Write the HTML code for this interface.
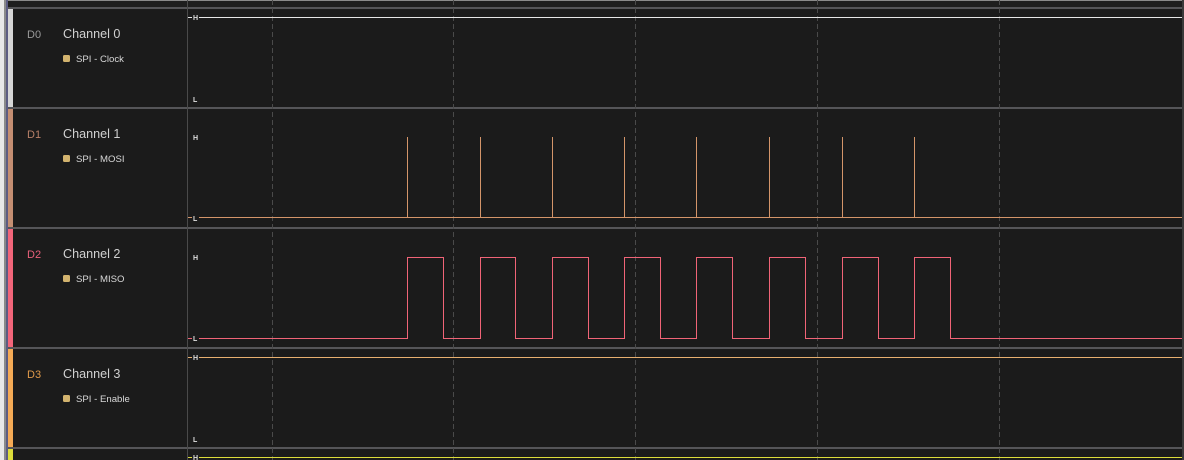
<!DOCTYPE html>
<html><head><style>
html,body{margin:0;padding:0;background:#1b1b1b;width:1184px;height:460px;overflow:hidden}
svg{display:block}
text{font-family:"Liberation Sans",sans-serif}
</style></head><body>
<svg width="1184" height="460" xmlns="http://www.w3.org/2000/svg">
<rect width="1184" height="460" fill="#1b1b1b"/>
<rect x="0" y="0" width="4" height="460" fill="#e8e8e8"/>
<rect x="4" y="0" width="2" height="460" fill="#8a8a8a"/>
<rect x="6" y="0" width="2" height="460" fill="#5c5c82"/>
<rect x="8" y="9" width="5" height="98" fill="#d6d6d6"/>
<rect x="8" y="109" width="5" height="118" fill="#c48e72"/>
<rect x="8" y="229" width="5" height="118" fill="#f2657a"/>
<rect x="8" y="349" width="5" height="98" fill="#f5aa55"/>
<rect x="8" y="449" width="5" height="11" fill="#dcdc3a"/>
<rect x="8" y="0" width="1176" height="8" fill="#1e1e1e"/>
<rect x="8" y="0" width="1176" height="1" fill="#8a8a8a"/>
<g fill="#555558">
<rect x="8" y="7" width="1176" height="2"/>
<rect x="8" y="107" width="1176" height="2"/>
<rect x="8" y="227" width="1176" height="2"/>
<rect x="8" y="347" width="1176" height="2"/>
<rect x="8" y="447" width="1176" height="2"/>
</g>
<rect x="187" y="0" width="1" height="460" fill="#4a4a4a"/>
<rect x="1182" y="0" width="2" height="460" fill="#3a3a3a"/>
<g stroke="#4a4a4a" stroke-width="1" stroke-dasharray="5,3">
<line x1="272.5" y1="0" x2="272.5" y2="460"/>
<line x1="453.5" y1="0" x2="453.5" y2="460"/>
<line x1="635.5" y1="0" x2="635.5" y2="460"/>
<line x1="817.5" y1="0" x2="817.5" y2="460"/>
<line x1="999.5" y1="0" x2="999.5" y2="460"/>
</g>
<g font-size="11">
<text x="27" y="38" fill="#9a9a9a">D0</text>
<text x="27" y="138" fill="#b88068">D1</text>
<text x="27" y="258" fill="#e8607a">D2</text>
<text x="27" y="378" fill="#e09a4a">D3</text>
</g>
<g font-size="12.6" fill="#d0d0d0">
<text x="63" y="38">Channel 0</text>
<text x="63" y="138">Channel 1</text>
<text x="63" y="258">Channel 2</text>
<text x="63" y="378">Channel 3</text>
</g>
<g fill="#d2b36e">
<rect x="63" y="55" width="7" height="7" rx="1.5"/>
<rect x="63" y="155" width="7" height="7" rx="1.5"/>
<rect x="63" y="275" width="7" height="7" rx="1.5"/>
<rect x="63" y="395" width="7" height="7" rx="1.5"/>
</g>
<g font-size="9.6" fill="#d8d8d8">
<text x="76" y="62">SPI - Clock</text>
<text x="76" y="162">SPI - MOSI</text>
<text x="76" y="282">SPI - MISO</text>
<text x="76" y="402">SPI - Enable</text>
</g>
<line x1="188" y1="17.5" x2="1182" y2="17.5" stroke="#e6e6e6" stroke-width="1"/>
<path d="M188 217.5 H1182 M407.5 217.5V137 M480.5 217.5V137 M552.5 217.5V137 M624.5 217.5V137 M696.5 217.5V137 M769.5 217.5V137 M842.5 217.5V137 M914.5 217.5V137" stroke="#d4956a" stroke-width="1" fill="none"/>
<path d="M188 338.5 H407.5 V257.5 H443.5 V338.5 H480.5 V257.5 H515.5 V338.5 H552.5 V257.5 H588.5 V338.5 H624.5 V257.5 H660.5 V338.5 H696.5 V257.5 H732.5 V338.5 H769.5 V257.5 H805.5 V338.5 H842.5 V257.5 H878.5 V338.5 H914.5 V257.5 H950.5 V338.5 H1182" stroke="#f06477" stroke-width="1" fill="none"/>
<line x1="188" y1="357.5" x2="1182" y2="357.5" stroke="#e8b070" stroke-width="1"/>
<line x1="188" y1="457.5" x2="1182" y2="457.5" stroke="#dcdc3a" stroke-width="1"/>
<g fill="#1b1b1b">
<rect x="192" y="13" width="7" height="9"/>
<rect x="192" y="213" width="7" height="9"/>
<rect x="192" y="334" width="7" height="9"/>
<rect x="192" y="353" width="7" height="9"/>
<rect x="192" y="453" width="7" height="7"/>
</g>
<g font-size="7" font-weight="bold" fill="#e0e0e0">
<text x="193" y="20">H</text><text x="193" y="102">L</text>
<text x="193" y="140">H</text><text x="193" y="221">L</text>
<text x="193" y="260">H</text><text x="193" y="341">L</text>
<text x="193" y="360">H</text><text x="193" y="442">L</text>
<text x="193" y="460">H</text>
</g>
</svg>
</body></html>
